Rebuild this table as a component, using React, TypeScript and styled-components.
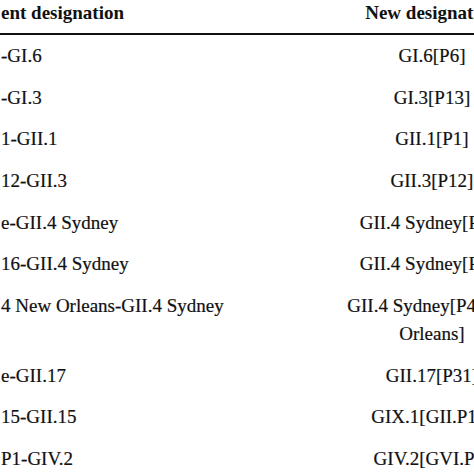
import styled, { createGlobalStyle } from 'styled-components';

const GlobalStyle = createGlobalStyle`
  html, body {
    margin: 0;
    padding: 0;
    background: #ffffff;
    overflow: hidden;
  }
  body {
    width: 474px;
    height: 474px;
  }
`;

const rows: { current: string; proposed: string }[] = [
  { current: '-GI.6', proposed: 'GI.6[P6]' },
  { current: '-GI.3', proposed: 'GI.3[P13]' },
  { current: '1-GII.1', proposed: 'GII.1[P1]' },
  { current: '12-GII.3', proposed: 'GII.3[P12]' },
  { current: 'e-GII.4 Sydney', proposed: 'GII.4 Sydney[P31]' },
  { current: '16-GII.4 Sydney', proposed: 'GII.4 Sydney[P16]' },
  { current: '4 New Orleans-GII.4 Sydney', proposed: 'GII.4 Sydney[P4 New Orleans]' },
  { current: 'e-GII.17', proposed: 'GII.17[P31]' },
  { current: '15-GII.15', proposed: 'GIX.1[GII.P15]' },
  { current: 'P1-GIV.2', proposed: 'GIV.2[GVI.P1]' },
];

// the table is wider than the window, as in the cropped figure
const Page = styled.div`
  width: 474px;
  height: 474px;
  overflow: hidden;
  font-family: 'Liberation Serif', 'Times New Roman', serif;
  color: #111111;
`;

const Table = styled.table`
  width: 522px;
  table-layout: fixed;
  border-collapse: collapse;
  border-spacing: 0;
`;

const HeadCell = styled.th<{ $align: 'left' | 'center' }>`
  font-size: 19px;
  font-weight: 700;
  line-height: 26px;
  padding: 0 0 7px ${p => (p.$align === 'left' ? '1px' : '0')};
  text-align: ${p => p.$align};
  border-bottom: 2px solid #111111;
  white-space: nowrap;
`;

const Cell = styled.td<{ $align: 'left' | 'center' }>`
  font-size: 19px;
  font-weight: 400;
  line-height: 28px;
  padding: 7px 0 6.67px ${p => (p.$align === 'left' ? '1px' : '0')};
  text-align: ${p => p.$align};
  vertical-align: top;
  white-space: ${p => (p.$align === 'left' ? 'nowrap' : 'normal')};
  -webkit-text-stroke: 0.2px #111111;
`;

export default function App() {
  return (
    <Page>
      <GlobalStyle />
      <Table>
        <colgroup>
          <col style={{ width: 342 }} />
          <col style={{ width: 180 }} />
        </colgroup>
        <thead>
          <tr>
            <HeadCell $align="left">ent designation</HeadCell>
            <HeadCell $align="center">New designation</HeadCell>
          </tr>
        </thead>
        <tbody>
          {rows.map(r => (
            <tr key={r.current}>
              <Cell $align="left">{r.current}</Cell>
              <Cell $align="center">{r.proposed}</Cell>
            </tr>
          ))}
        </tbody>
      </Table>
    </Page>
  );
}
